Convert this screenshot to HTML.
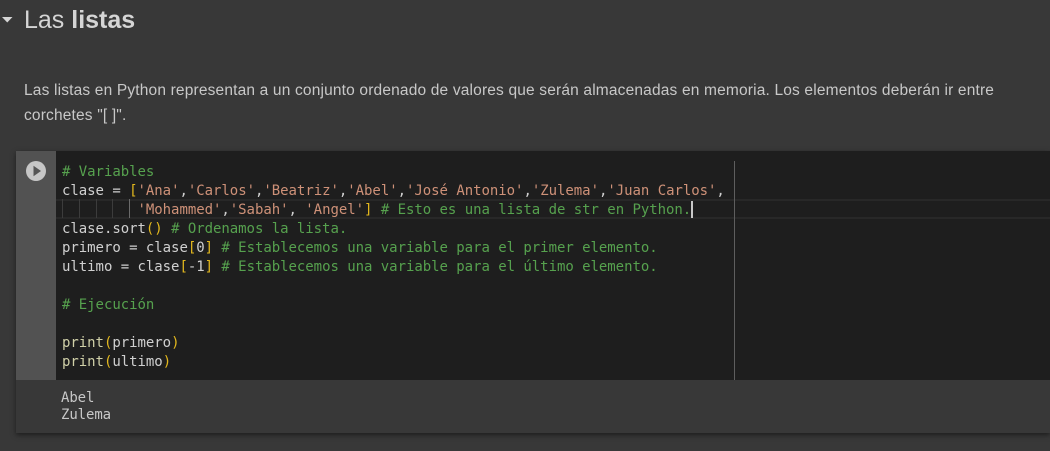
<!DOCTYPE html>
<html lang="es"><head><meta charset="utf-8"><title>Las listas</title>
<style>
html,body{margin:0;padding:0;width:1050px;height:451px;overflow:hidden;background:#383838}
body{position:relative;font-family:"Liberation Sans",sans-serif}
.a{position:absolute;white-space:pre}
.h{left:24px;top:4px;font-size:25px;line-height:32px;color:#d5d5d5;letter-spacing:0}
.h b{font-weight:700;color:#d5d5d5}
.p{left:24px;font-size:15.5px;line-height:26px;color:#c8c8c8;letter-spacing:.17px}
#cell{position:absolute;left:16px;top:151px;width:1034px;height:282px;background:#383838;box-shadow:0 2px 5px rgba(0,0,0,.5)}
#gut{position:absolute;left:16px;top:151px;width:40px;height:229px;background:#525252}
#code{position:absolute;left:56px;top:151px;width:994px;height:229px;background:#1e1e1e}
#band{position:absolute;left:56px;top:199px;width:994px;height:16px;border-top:2px solid #282828;border-bottom:2px solid #282828}
.g{position:absolute;top:199px;width:1px;height:19px;background:#3c3c3c}
.l{position:absolute;left:62px;font:14px/19px "DejaVu Sans Mono",monospace;letter-spacing:-.04px;color:#d0d0d0;white-space:pre}
.o{position:absolute;left:61px;font:14px/17px "DejaVu Sans Mono",monospace;letter-spacing:-.1px;color:#c8c8c8;white-space:pre}
.c{color:#56a14e}.s{color:#ce9178}.y{color:#e3b81d}.f{color:#d0d0a8}
</style></head><body>
<svg style="position:absolute;left:2px;top:17px" width="11" height="6"><path d="M0 0H10.5L5.25 5.5Z" fill="#d5d5d5"/></svg>
<div class="a h">Las <b>listas</b></div>
<div class="a p" style="top:78px">Las listas en Python representan a un conjunto ordenado de valores que serán almacenadas en memoria. Los elementos deberán ir entre</div>
<div class="a p" style="top:103px">corchetes "[ ]".</div>
<div id="cell"></div><div id="gut"></div><div id="code"></div><div id="band"></div>
<svg style="position:absolute;left:26px;top:161px" width="20" height="20"><circle cx="10" cy="10" r="10" fill="#c6c6c6"/><path d="M7.5 4.8V15.2L15 10Z" fill="#555"/></svg>
<div class="g" style="left:62px"></div><div class="g" style="left:79px"></div><div class="g" style="left:96px"></div><div class="g" style="left:112px"></div><div class="g" style="left:129px;background:#6a6a6a"></div>
<div style="position:absolute;left:734px;top:161px;width:1px;height:219px;background:#5e5e5e"></div>
<div style="position:absolute;left:691px;top:201px;width:2px;height:17px;background:#c8c8c8"></div>
<div class="l" style="top:163px"><span class="c"># Variables</span></div>
<div class="l" style="top:182px">clase = <span class="y">[</span><span class="s">'Ana'</span>,<span class="s">'Carlos'</span>,<span class="s">'Beatriz'</span>,<span class="s">'Abel'</span>,<span class="s">'José Antonio'</span>,<span class="s">'Zulema'</span>,<span class="s">'Juan Carlos'</span>,</div>
<div class="l" style="top:201px">         <span class="s">'Mohammed'</span>,<span class="s">'Sabah'</span>, <span class="s">'Angel'</span><span class="y">]</span> <span class="c"># Esto es una lista de str en Python.</span></div>
<div class="l" style="top:220px">clase.sort<span class="y">()</span> <span class="c"># Ordenamos la lista.</span></div>
<div class="l" style="top:239px">primero = clase<span class="y">[</span>0<span class="y">]</span> <span class="c"># Establecemos una variable para el primer elemento.</span></div>
<div class="l" style="top:258px">ultimo = clase<span class="y">[</span>-1<span class="y">]</span> <span class="c"># Establecemos una variable para el último elemento.</span></div>
<div class="l" style="top:296px"><span class="c"># Ejecución</span></div>
<div class="l" style="top:334px"><span class="f">print</span><span class="y">(</span>primero<span class="y">)</span></div>
<div class="l" style="top:353px"><span class="f">print</span><span class="y">(</span>ultimo<span class="y">)</span></div>
<div class="o" style="top:390px">Abel</div>
<div class="o" style="top:407px">Zulema</div>
</body></html>
